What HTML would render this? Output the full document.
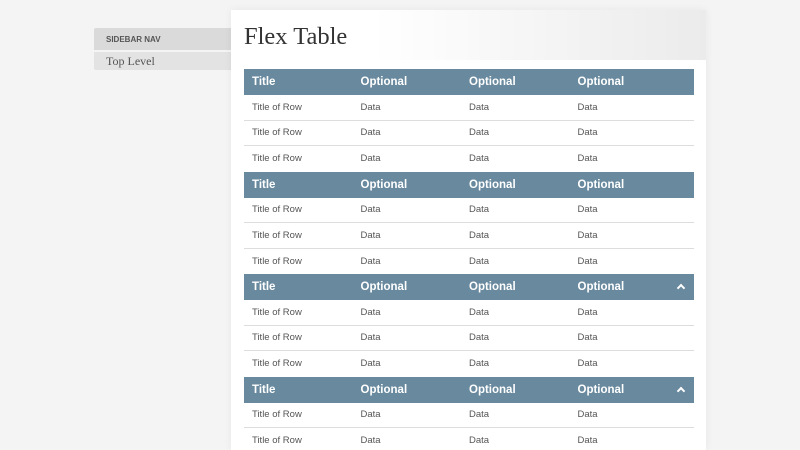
<!DOCTYPE html>
<html style="width:800px;height:450px;overflow:hidden"><head><style>
*{margin:0;padding:0;box-sizing:border-box}
body{width:800px;height:450px;overflow:hidden;background:#f4f4f4;font-family:"Liberation Sans",sans-serif;position:relative}
.sb{position:absolute;left:94px;top:28px;width:137px}
.sb1{height:22px;background:#dadada;font-size:8px;font-weight:bold;color:#555;padding:7px 0 0 12px;border-radius:2px 0 0 0}
.sb2{margin-top:2px;height:18px;background:#e3e3e3;font-family:"Liberation Serif",serif;font-size:12px;color:#555;padding:2px 0 0 12px;border-radius:0 0 0 2px}
.card{position:absolute;left:231px;top:10px;width:475px;height:440px;background:#fff;box-shadow:0 0 8px rgba(0,0,0,.06)}
.hd{height:50px;background:linear-gradient(90deg,#fff 30%,#ebebeb);padding:13px 0 0 13px;font-family:"Liberation Serif",serif;font-size:24.5px;color:#333}
.tb{position:absolute;left:13px;top:59px;width:450px}
.h,.r{display:flex;position:relative}
.h{height:26px;background:#68899e;color:#fff;font-weight:bold;font-size:11.5px;align-items:center}
.r{height:25.5px;border-bottom:1px solid #ddd;color:#555;font-size:9.5px;align-items:center}
.r:nth-child(4n){border-bottom:none}
.h span,.r span{width:108.5px;padding-left:8px}
.ch{position:absolute;right:10px;top:11px;width:6px;height:6px;border-left:2px solid #fff;border-top:2px solid #fff;transform:rotate(45deg)}
</style></head><body>
<div class="sb"><div class="sb1">SIDEBAR NAV</div><div class="sb2">Top Level</div></div>
<div class="card"><div class="hd">Flex Table</div>
<div class="tb">
<div class="h"><span>Title</span><span>Optional</span><span>Optional</span><span>Optional</span></div>
<div class="r"><span>Title of Row</span><span>Data</span><span>Data</span><span>Data</span></div>
<div class="r"><span>Title of Row</span><span>Data</span><span>Data</span><span>Data</span></div>
<div class="r"><span>Title of Row</span><span>Data</span><span>Data</span><span>Data</span></div>
<div class="h"><span>Title</span><span>Optional</span><span>Optional</span><span>Optional</span></div>
<div class="r"><span>Title of Row</span><span>Data</span><span>Data</span><span>Data</span></div>
<div class="r"><span>Title of Row</span><span>Data</span><span>Data</span><span>Data</span></div>
<div class="r"><span>Title of Row</span><span>Data</span><span>Data</span><span>Data</span></div>
<div class="h"><span>Title</span><span>Optional</span><span>Optional</span><span>Optional</span><i class="ch"></i></div>
<div class="r"><span>Title of Row</span><span>Data</span><span>Data</span><span>Data</span></div>
<div class="r"><span>Title of Row</span><span>Data</span><span>Data</span><span>Data</span></div>
<div class="r"><span>Title of Row</span><span>Data</span><span>Data</span><span>Data</span></div>
<div class="h"><span>Title</span><span>Optional</span><span>Optional</span><span>Optional</span><i class="ch"></i></div>
<div class="r"><span>Title of Row</span><span>Data</span><span>Data</span><span>Data</span></div>
<div class="r"><span>Title of Row</span><span>Data</span><span>Data</span><span>Data</span></div>
</div></div>
</body></html>
